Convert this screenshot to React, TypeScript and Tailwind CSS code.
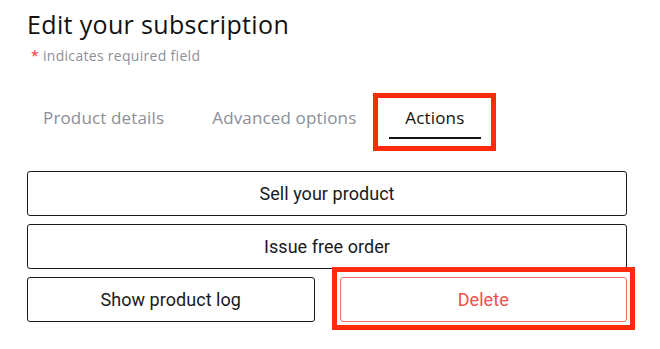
import React from "react";

const btn =
  "h-[45px] flex items-center justify-center rounded-[3px] border border-[#1a1a1a] bg-white text-[18px] text-[#1a1a1a] font-['Roboto',sans-serif] tracking-[0.05px]";

export default function App() {
  return (
    <div className="w-[660px] h-[349px] bg-white overflow-hidden font-['Open_Sans',sans-serif]">
      <div className="pl-[27px] pt-[8px]">
        <h1 className="text-[25px] leading-[32px] text-[#111] tracking-[0.35px]">
          Edit your subscription
        </h1>
        <p className="mt-[7px] pl-[4px] text-[14px] leading-[18px] text-[#8b8f98] tracking-[0.3px]">
          <span className="text-[#ee3333]">*</span> indicates required field
        </p>
      </div>

      <div className="mt-[28px] flex items-start pl-[43px] h-[58px]">
        <div className="pt-[14px] text-[17px] leading-[22px] text-[#8b8f98] tracking-[0.15px]">Product details</div>
        <div className="ml-[48px] pt-[14px] text-[17px] leading-[22px] text-[#8b8f98] tracking-[0.15px]">Advanced options</div>
        <div className="relative ml-[17px] w-[123px] h-[58px] border-[5px] border-[#ff2a0a] flex justify-center">
          <div className="flex flex-col items-center">
            <div className="pt-[9px] text-[17px] leading-[22px] text-[#111] tracking-[0.15px]">Actions</div>
            <div className="mt-[8px] w-[92px] h-[2px] bg-[#111]" />
          </div>
        </div>
      </div>

      <div className="mt-[20px] flex flex-col gap-[8px] pl-[27px] w-[627px]">
        <button className={btn}>Sell your product</button>
        <button className={btn}>Issue free order</button>
        <div className="grid grid-cols-2 gap-[25px]">
          <button className={btn}>Show product log</button>
          <div className="relative">
            <button className="w-full h-[45px] flex items-center justify-center rounded-[3px] border border-[#f26b6b] bg-white text-[18px] text-[#f24e4e] font-['Roboto',sans-serif] tracking-[0.05px]">
              Delete
            </button>
            <div className="absolute left-[-8px] top-[-10px] right-[-8px] bottom-[-8px] border-[5px] border-[#ff2a0a] pointer-events-none" />
          </div>
        </div>
      </div>
    </div>
  );
}
